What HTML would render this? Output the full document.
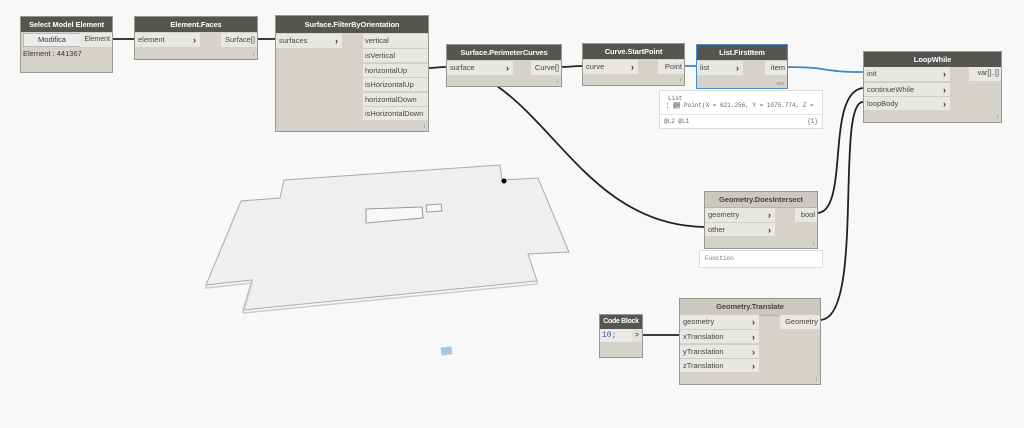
<!DOCTYPE html>
<html><head><meta charset="utf-8"><style>
body{margin:0;width:1024px;height:428px;background:#f8f8f8;overflow:hidden;position:relative;font-family:"Liberation Sans","DejaVu Sans",sans-serif;font-size:7.5px;color:#333;white-space:nowrap}
.n{position:absolute;background:#d5d2cb;border:1px solid #9a978f;box-sizing:border-box}
.h{background:#575552;color:#fff;font-weight:bold;text-align:center;height:15px;line-height:15px;font-size:7.5px;letter-spacing:-0.1px;overflow:hidden}
.hl{background:#cbc8c1;color:#444;border-bottom:1px solid #b5b2ab}
.r{position:absolute;height:14px;line-height:14px;background:#e9e7e3;padding-left:3px;box-sizing:border-box;font-size:7.5px;color:#444}
.r b{position:absolute;right:4px;top:0;font-weight:bold;font-size:9px;color:#333}
.o{position:absolute;height:14px;line-height:14px;background:#e9e7e3;padding:0 2px;box-sizing:border-box;font-size:7.5px;color:#444;text-align:right}
.ft{position:absolute;right:3px;bottom:1px;font-size:5px;color:#888}
.sep{border-top:1px solid #d0cec9}
</style></head><body>
<svg width="1024" height="428" style="position:absolute;left:0;top:0">
<g fill="none" stroke="#222" stroke-width="1.8">
<path d="M112 39H134"/><path d="M257 39H275"/><path d="M428 68C437 68 437 67 446 67"/><path d="M561 67C571 67 572 66 582 66"/>
<path d="M497 86C560 130 600 225 704 227"/>
<path d="M817 213C850 213 825 92 863 88"/>
<path d="M820 320C865 320 835 102 863 102"/>
<path d="M642 335H679"/>
</g>
<g fill="none" stroke="#3d87c8" stroke-width="1.8"><path d="M684 66H696"/><path d="M787 67C830 67 820 72 863 72"/></g>
<polygon points="284,180 500,165 502,180 538,178 569,252 528,254 537,281 243,310 252,280 206,285 241,201 280,198" fill="#efefef" stroke="#aaa" stroke-width="1"/>
<polyline points="206,285 206,288 252,283 243,313 537,284 537,281" fill="none" stroke="#ccc" stroke-width="1.5"/>
<polygon points="366,209 422,207 423,218 366,223" fill="#f8f8f8" stroke="#999" stroke-width="1"/>
<polygon points="426,205 441,204 442,211 427,212" fill="#f8f8f8" stroke="#999" stroke-width="1"/>
<circle cx="504" cy="181" r="2.5" fill="#000"/>
<rect x="441" y="347" width="11" height="8" fill="#a9c8e0" transform="rotate(-8 446 351)"/>
</svg>

<div class="n" style="left:20px;top:16px;width:93px;height:57px">
<div class="h">Select Model Element</div>
<div style="position:absolute;left:2px;top:16px;width:56px;height:12px;background:#eeedeb;border:1px solid #bbb;text-align:center;line-height:12px;font-size:7.5px;color:#333">Modifica</div>
<div class="o" style="right:0;top:16px;width:32px;font-size:7px">Element</div>
<div style="position:absolute;left:2px;top:32px;font-size:7.5px">Element : 441367</div>
</div>

<div class="n" style="left:134px;top:16px;width:124px;height:44px">
<div class="h">Element.Faces</div>
<div class="r" style="left:0;top:16px;width:65px">element<b>›</b></div>
<div class="o" style="right:0;top:16px;width:36px">Surface[]</div>
<div class="ft">I</div></div>

<div class="n" style="left:275px;top:15px;width:154px;height:117px">
<div class="h" style="height:17px;line-height:17px">Surface.FilterByOrientation</div>
<div class="r" style="left:0;top:18px;width:66px">surfaces<b>›</b></div>
<div class="o" style="right:0;top:18px;width:65px;text-align:left">vertical</div>
<div class="o sep" style="right:0;top:32px;width:65px;text-align:left">isVertical</div>
<div class="o sep" style="right:0;top:47px;width:65px;text-align:left">horizontalUp</div>
<div class="o sep" style="right:0;top:61px;width:65px;text-align:left">isHorizontalUp</div>
<div class="o sep" style="right:0;top:76px;width:65px;text-align:left">horizontalDown</div>
<div class="o sep" style="right:0;top:90px;width:65px;text-align:left">isHorizontalDown</div>
<div class="ft">I</div></div>

<div class="n" style="left:446px;top:44px;width:116px;height:43px">
<div class="h">Surface.PerimeterCurves</div>
<div class="r" style="left:0;top:16px;width:66px">surface<b>›</b></div>
<div class="o" style="right:0;top:16px;width:30px">Curve[]</div>
<div class="ft">I</div></div>

<div class="n" style="left:582px;top:43px;width:103px;height:43px">
<div class="h">Curve.StartPoint</div>
<div class="r" style="left:0;top:16px;width:55px">curve<b>›</b></div>
<div class="o" style="right:0;top:16px;width:26px">Point</div>
<div class="ft">I</div></div>

<div class="n" style="left:696px;top:44px;width:92px;height:45px;border:1.5px solid #4a8ccc">
<div class="h">List.FirstItem</div>
<div class="r" style="left:0;top:16px;width:46px">list<b>›</b></div>
<div class="o" style="right:0;top:16px;width:22px">item</div>
<div class="ft">xxx</div></div>

<div style="position:absolute;left:659px;top:90px;width:164px;height:39px;background:#fff;border:1px solid #ddd;box-sizing:border-box;font-family:'Liberation Mono',monospace;font-size:6px;color:#666;overflow:hidden">
<div style="position:absolute;left:8px;top:4px">List</div>
<div style="position:absolute;left:6px;top:11px;white-space:nowrap">¦ <span style="background:#ccc">@0</span> Point(X = 621.256, Y = 1075.774, Z =</div>
<div style="position:absolute;left:0;right:0;top:23px;border-top:1px solid #e4e4e4"></div>
<div style="position:absolute;left:4px;top:27px">@L2 @L1</div>
<div style="position:absolute;right:4px;top:27px">{1}</div></div>

<div class="n" style="left:863px;top:51px;width:139px;height:72px">
<div class="h">LoopWhile</div>
<div class="r" style="left:0;top:15px;width:86px">init<b>›</b></div>
<div class="r sep" style="left:0;top:30px;width:86px">continueWhile<b>›</b></div>
<div class="r sep" style="left:0;top:44px;width:86px">loopBody<b>›</b></div>
<div class="o" style="right:0;top:15px;width:32px;font-size:7px">var[]..[]</div>
<div class="ft">I</div></div>

<div class="n" style="left:704px;top:191px;width:114px;height:58px">
<div class="h hl">Geometry.DoesIntersect</div>
<div class="r" style="left:0;top:16px;width:70px">geometry<b>›</b></div>
<div class="r sep" style="left:0;top:30px;width:70px">other<b>›</b></div>
<div class="o" style="right:0;top:16px;width:22px">bool</div>
<div class="ft">I</div></div>

<div style="position:absolute;left:699px;top:250px;width:124px;height:18px;background:#fff;border:1px solid #ddd;box-sizing:border-box;font-family:'Liberation Mono',monospace;font-size:6px;color:#777;line-height:16px;padding-left:5px">Function</div>

<div class="n" style="left:599px;top:314px;width:44px;height:44px">
<div class="h" style="height:14px;line-height:14px;font-size:7px;letter-spacing:-0.3px">Code Block</div>
<div style="position:absolute;left:0;top:14px;width:32px;height:13px;background:#eceae6;font-family:'Liberation Mono',monospace;font-size:8px;color:#2a5ea8;line-height:13px;padding-left:2px">10;</div>
<div style="position:absolute;right:0;top:14px;width:10px;height:13px;background:#e2e0dc;font-size:7px;line-height:13px;text-align:center">&gt;</div>
</div>

<div class="n" style="left:679px;top:298px;width:142px;height:87px">
<div class="h hl" style="height:16px;line-height:16px">Geometry.Translate</div>
<div class="r" style="left:0;top:16px;width:79px">geometry<b>›</b></div>
<div class="r sep" style="left:0;top:30px;width:79px">xTranslation<b>›</b></div>
<div class="r sep" style="left:0;top:45px;width:79px">yTranslation<b>›</b></div>
<div class="r sep" style="left:0;top:59px;width:79px">zTranslation<b>›</b></div>
<div class="o" style="right:0;top:16px;width:40px">Geometry</div>
<div class="ft">I</div></div>
</body></html>
